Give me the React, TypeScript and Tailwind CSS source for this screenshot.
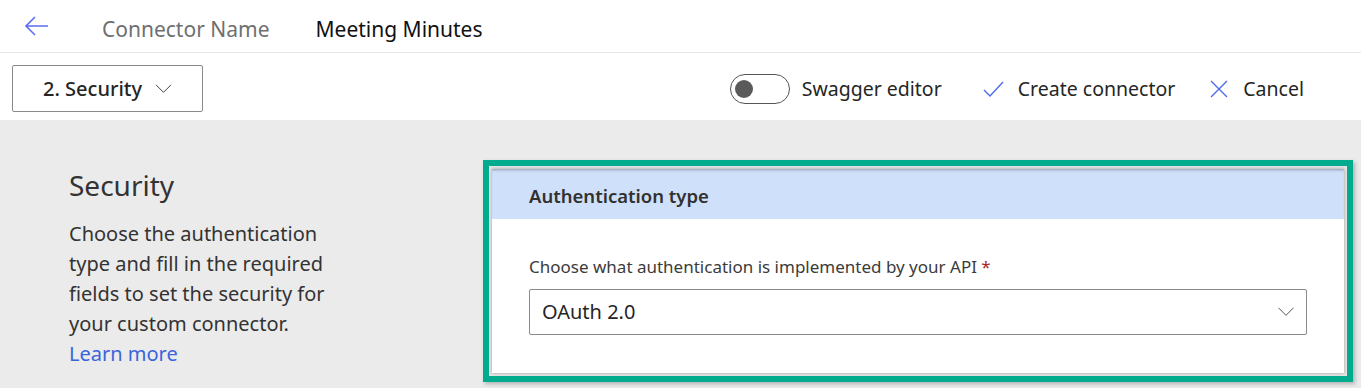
import React from "react";

const font = { fontFamily: '"Noto Sans", "Open Sans", Arial, sans-serif' };

function Chevron({ className }: { className?: string }) {
  return (
    <svg className={className} viewBox="0 0 20 12" fill="none" stroke="currentColor" strokeWidth={1.2}>
      <path d="M1 1l9 9 9-9" />
    </svg>
  );
}

export default function App() {
  return (
    <div className="w-[1361px] h-[388px] flex flex-col bg-white overflow-hidden text-[#323130]" style={font}>
      {/* title bar */}
      <div className="h-[53px] flex items-center pt-[6px] border-b border-[#e6e6e6] shrink-0">
        <svg className="ml-[24px] -mt-[7px] w-[25px] h-[20px] text-[#5b6ef0]" viewBox="0 0 25 20" fill="none" stroke="currentColor" strokeWidth={1.6}>
          <path d="M24 10H2M11 1L2 10l9 9" />
        </svg>
        <span className="ml-[53px] text-[21px] text-[#6f6f6f] leading-none">Connector Name</span>
        <span className="ml-[46px] text-[21px] text-[#111] leading-none">Meeting Minutes</span>
      </div>

      {/* toolbar */}
      <div className="h-[67px] flex items-center shrink-0 px-[12px] pt-[4px]">
        <button className="w-[191px] h-[47px] border border-[#8a8a8a] rounded-[2px] flex items-center pl-[30px] text-[20px] font-medium text-[#252525]">
          2. Security
          <Chevron className="ml-[13px] w-[17px] h-[10px] text-[#444]" />
        </button>
        <div className="ml-auto flex items-center">
          <div className="w-[60px] h-[30px] rounded-full border border-[#555] flex items-center pl-[4px]">
            <div className="w-[18px] h-[18px] rounded-full bg-[#5a5a5a]" />
          </div>
          <span className="ml-[12px] text-[19.5px] text-[#252525]">Swagger editor</span>
          <svg className="ml-[41px] w-[21px] h-[16px] text-[#4f6bed]" viewBox="0 0 21 16" fill="none" stroke="currentColor" strokeWidth={1.4}>
            <path d="M1 9l6 6L20 1" />
          </svg>
          <span className="ml-[14px] text-[19.5px] text-[#252525]">Create connector</span>
          <svg className="ml-[35px] w-[18px] h-[18px] text-[#4f6bed]" viewBox="0 0 18 18" fill="none" stroke="currentColor" strokeWidth={1.4}>
            <path d="M1 1l16 16M17 1L1 17" />
          </svg>
          <span className="ml-[15px] mr-[45px] text-[19.5px] text-[#252525]">Cancel</span>
        </div>
      </div>

      {/* content */}
      <div className="flex-1 bg-[#ebebeb] flex">
        <div className="w-[483px] shrink-0 pl-[69px] pt-[47px]">
          <h2 className="text-[28px] leading-[36px] text-[#333] font-normal">Security</h2>
          <p className="mt-[16px] w-[280px] text-[20px] leading-[30px] text-[#333]">
            Choose the authentication type and fill in the required fields to set the security for your custom connector.
          </p>
          <a className="block text-[20px] leading-[30px] text-[#3a64dc]">Learn more</a>
        </div>

        <div className="mt-[40px] w-[870px] h-[222px] border-[6px] border-[#00ab8e] bg-[#e4e4e4] p-[3px] shadow-[2px_2px_4px_rgba(0,0,0,0.25)]">
          <div className="h-full bg-white flex flex-col shadow-[0_0_3px_rgba(0,0,0,0.3)]">
            <div className="h-[50px] bg-[#cfe0fa] flex items-center pt-[4px] px-[37px] shadow-[inset_0_3px_3px_-2px_rgba(0,0,0,0.3)]">
              <span className="text-[18.5px] font-semibold text-[#323130]">Authentication type</span>
            </div>
            <div className="px-[37px] pt-[38px]">
              <div className="text-[17px] leading-[20px] text-[#3b3b3b]">
                Choose what authentication is implemented by your API <span className="text-[#a4262c]">*</span>
              </div>
              <div className="mt-[12px] h-[46px] border border-[#8a8a8a] rounded-[2px] flex items-center pl-[12px] pr-[11px]">
                <span className="text-[20px] text-[#252525]">OAuth 2.0</span>
                <Chevron className="ml-auto w-[18px] h-[10px] text-[#555]" />
              </div>
            </div>
          </div>
        </div>
      </div>
    </div>
  );
}
